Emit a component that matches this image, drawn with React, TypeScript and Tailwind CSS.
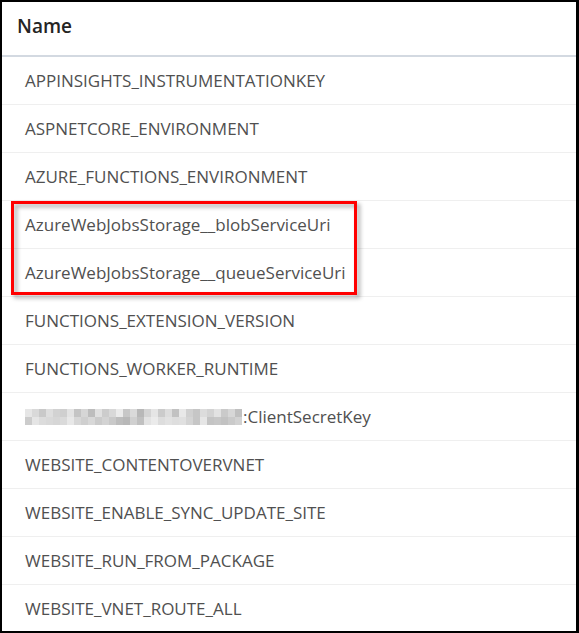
import React from 'react';

type Row = { name: string; masked?: boolean };

const rows: Row[] = [
  { name: 'APPINSIGHTS_INSTRUMENTATIONKEY' },
  { name: 'ASPNETCORE_ENVIRONMENT' },
  { name: 'AZURE_FUNCTIONS_ENVIRONMENT' },
  { name: 'AzureWebJobsStorage__blobServiceUri' },
  { name: 'AzureWebJobsStorage__queueServiceUri' },
  { name: 'FUNCTIONS_EXTENSION_VERSION' },
  { name: 'FUNCTIONS_WORKER_RUNTIME' },
  { name: ':ClientSecretKey', masked: true },
  { name: 'WEBSITE_CONTENTOVERVNET' },
  { name: 'WEBSITE_ENABLE_SYNC_UPDATE_SITE' },
  { name: 'WEBSITE_RUN_FROM_PACKAGE' },
  { name: 'WEBSITE_VNET_ROUTE_ALL' },
];

// pixelated blur in front of the masked key name
const shades = [
  'e6e6e6', 'd9d9d9', 'c9c9c9', 'dedede', 'd2d2d2', 'cfcfcf', 'e3e3e3', 'c4c4c4', 'd6d6d6', 'bdbdbd',
  'e0e0e0', 'cccccc', 'd8d8d8', 'ebebeb', 'c7c7c7', 'dadada', 'b8b8b8', 'd4d4d4', 'e5e5e5', 'cbcbcb',
  'dddddd', 'c2c2c2', 'e8e8e8', 'd0d0d0', 'c6c6c6', 'dcdcdc', 'd3d3d3', 'e2e2e2', 'cacaca', 'd7d7d7',
  'c0c0c0',
];

const Mosaic = () => (
  <div className="flex flex-col mr-px">
    {[0, 1].map((r) => (
      <div key={r} className="flex">
        {shades.map((c, i) => {
          const s = shades[(i * 7 + r * 11) % shades.length];
          return <div key={i} className="w-[7px] h-[8px]" style={{ backgroundColor: `#${r ? s : c}` }} />;
        })}
      </div>
    ))}
  </div>
);

const NameRow = ({ row }: { row: Row }) => (
  <div className="flex items-center h-[48px] pl-[23px] border-b border-[#efefef] text-[17px] text-[#505050]">
    {row.masked && <Mosaic />}
    <span>{row.name}</span>
  </div>
);

export default function App() {
  return (
    <div
      className="w-[579px] h-[633px] overflow-hidden bg-white border-black border-t-2 border-l-2 border-r-[3px] border-b-2"
      style={{ fontFamily: '"Open Sans", "Noto Sans", sans-serif' }}
    >
      <div className="h-[55px] flex items-center pl-[15px] pb-[5px] border-b-2 border-[#d3d9e1]">
        <span className="text-[19px] font-semibold text-[#252423]">Name</span>
      </div>
      {rows.slice(0, 3).map((r) => (
        <NameRow key={r.name} row={r} />
      ))}
      <div className="relative">
        {rows.slice(3, 5).map((r) => (
          <NameRow key={r.name} row={r} />
        ))}
        <div className="absolute left-[9px] top-0 w-[346px] h-[94px] border-[3px] border-[#ff0000] drop-shadow-[3px_3px_2px_rgba(0,0,0,0.35)]" />
      </div>
      {rows.slice(5).map((r) => (
        <NameRow key={r.name} row={r} />
      ))}
    </div>
  );
}
